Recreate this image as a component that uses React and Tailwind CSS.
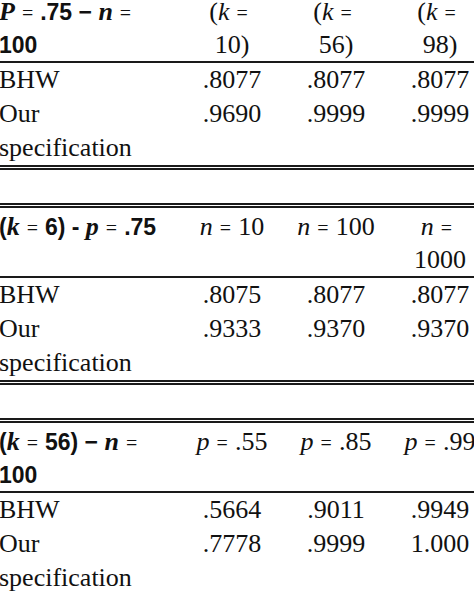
const I = ({ children, bold }) => (
  <i className={bold ? "font-bold" : "font-normal"}>{children}</i>
);

const Eq = () => <span className="mx-[7px] text-[20px] leading-none">=</span>;

const B = ({ children }) => (
  <span className="font-['Liberation_Sans',sans-serif] font-bold text-[23px] leading-none">{children}</span>
);

const sections = [
  {
    head: [
      <>
        <I bold>P</I>
        <Eq />
        <B>.75</B>
        <B> − </B>
        <I bold>n</I>
        <Eq />
        <br />
        <B>100</B>
      </>,
      <>
        (<I>k</I>
        <Eq />
        <br />
        10)
      </>,
      <>
        (<I>k</I>
        <Eq />
        <br />
        56)
      </>,
      <>
        (<I>k</I>
        <Eq />
        <br />
        98)
      </>,
    ],
    rows: [
      ["BHW", ".8077", ".8077", ".8077"],
      ["Our specification", ".9690", ".9999", ".9999"],
    ],
  },
  {
    head: [
      <>
        <B>(</B>
        <I bold>k</I>
        <Eq />
        <B>6) - </B>
        <I bold>p</I>
        <Eq />
        <B>.75</B>
      </>,
      <>
        <I>n</I>
        <Eq />
        10
      </>,
      <>
        <I>n</I>
        <Eq />
        100
      </>,
      <>
        <I>n</I>
        <Eq />
        <br />
        1000
      </>,
    ],
    rows: [
      ["BHW", ".8075", ".8077", ".8077"],
      ["Our specification", ".9333", ".9370", ".9370"],
    ],
  },
  {
    head: [
      <>
        <B>(</B>
        <I bold>k</I>
        <Eq />
        <B>56) − </B>
        <I bold>n</I>
        <Eq />
        <br />
        <B>100</B>
      </>,
      <>
        <I>p</I>
        <Eq />
        .55
      </>,
      <>
        <I>p</I>
        <Eq />
        .85
      </>,
      <>
        <I>p</I>
        <Eq />
        .99
      </>,
    ],
    rows: [
      ["BHW", ".5664", ".9011", ".9949"],
      ["Our specification", ".7778", ".9999", "1.000"],
    ],
  },
];

const Section = ({ head, rows }) => (
  <div className="border-y-[5px] border-double border-[#1a1a1a]">
    <div className="grid grid-cols-[181px_104px_104px_104px] pt-[2px] border-b-2 border-[#1a1a1a]">
      {head.map((h, i) => (
        <div key={i} className={i === 0 ? "text-left" : "text-center"}>
          {h}
        </div>
      ))}
    </div>
    <div className="leading-[34px]">
      {rows.map((r, ri) => (
        <div key={ri} className="grid grid-cols-[181px_104px_104px_104px]">
          {r.map((c, ci) => (
            <div key={ci} className={ci === 0 ? "text-left w-[150px]" : "text-center"}>
              {c}
            </div>
          ))}
        </div>
      ))}
    </div>
  </div>
);

export default function App() {
  return (
    <div className="w-[474px] h-[593px] overflow-hidden bg-white">
      <div className="w-[493px] -ml-[1px] -mt-[12px] flex flex-col gap-[33px] font-['Liberation_Serif',serif] text-[26px] leading-[33px] text-[#111]">
        {sections.map((s, i) => (
          <Section key={i} head={s.head} rows={s.rows} />
        ))}
      </div>
    </div>
  );
}
